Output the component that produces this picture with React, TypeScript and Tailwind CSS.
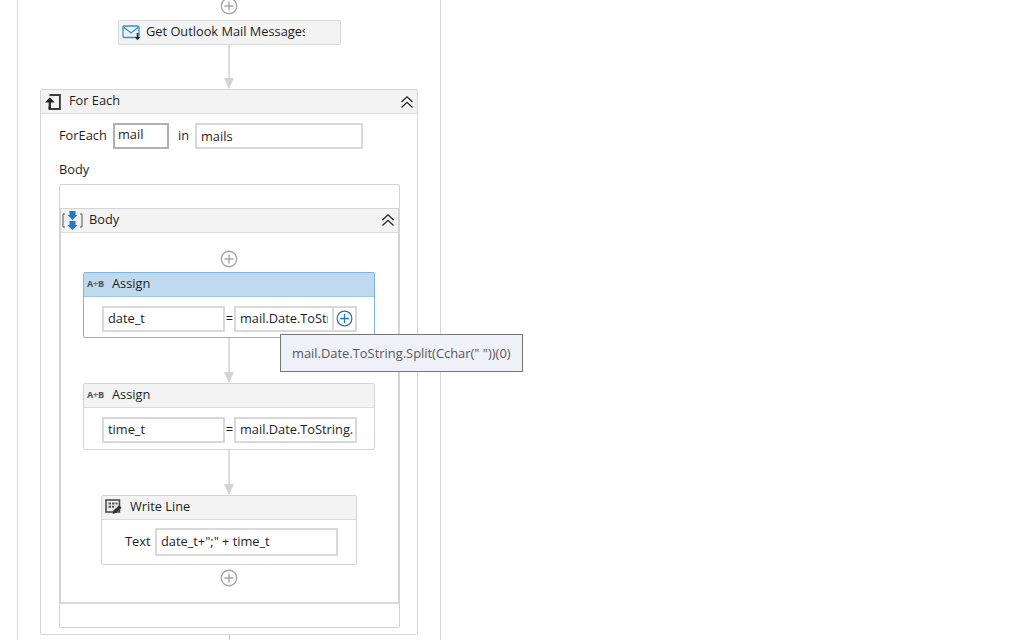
function AddButton({ className = '' }: { className?: string }) {
  return (
    <svg width="18" height="18" viewBox="0 0 18 18" className={className}>
      <circle cx="9" cy="9" r="7.7" fill="white" stroke="#a6a6a6" strokeWidth="1.4" />
      <path d="M9 4.5v9M4.5 9h9" stroke="#a6a6a6" strokeWidth="1.4" />
    </svg>
  );
}

function CollapseIcon() {
  return (
    <svg width="14" height="14" viewBox="0 0 14 14" className="shrink-0">
      <path d="M1.5 7L7 1.8 12.5 7M1.5 12.5L7 7.3l5.5 5.2" fill="none" stroke="#222" strokeWidth="1.2" />
    </svg>
  );
}

function Arrow({ height }: { height: number }) {
  return (
    <svg width="12" height={height} viewBox={`0 0 12 ${height}`} className="block shrink-0">
      <path d={`M6 0V${height - 10}`} stroke="#d4d4d4" strokeWidth="1.5" />
      <path d={`M1 ${height - 11}H11L6 ${height}Z`} fill="#d4d4d4" />
    </svg>
  );
}

function MailIcon() {
  return (
    <svg width="20" height="16" viewBox="0 0 20 16" className="shrink-0">
      <rect x="1" y="1" width="16" height="11.5" rx="1" fill="#eaf3fb" stroke="#3e8ed0" strokeWidth="1.3" />
      <path d="M1.5 2l7.5 6 7.5-6" fill="none" stroke="#3e8ed0" strokeWidth="1.3" />
      <path d="M15.5 8v5" stroke="#222" strokeWidth="1.5" />
      <path d="M12.8 12h5.4l-2.7 3.2z" fill="#222" />
    </svg>
  );
}

function ForEachIcon() {
  return (
    <svg width="16" height="16" viewBox="0 0 16 16" className="shrink-0">
      <path d="M4.5 1h10.4v14H4.5v-3" fill="none" stroke="#3a3a3a" strokeWidth="1.9" />
      <path d="M4.8 15V8" stroke="#222" strokeWidth="2.2" />
      <path d="M0 8.5l4.8-5.2 4.8 5.2z" fill="#222" />
    </svg>
  );
}

function SequenceIcon() {
  return (
    <svg width="21" height="19" viewBox="0 0 21 19" className="shrink-0">
      <path d="M3 3H1v13h2M18 3h2v13h-2" fill="none" stroke="#555" strokeWidth="1" />
      <path d="M7.5 0h6v4h2l-5 5-5-5h2z" fill="#1f78d1" />
      <path d="M7.5 10h6v4h2l-5 5-5-5h2z" fill="#1f78d1" />
    </svg>
  );
}

function AssignIcon() {
  return (
    <span className="text-[9px] font-bold leading-none tracking-[-0.2px] text-[#505050] w-[18px] shrink-0 whitespace-nowrap">
      A<span className="text-[#707070]">+</span>B
    </span>
  );
}

function WriteLineIcon() {
  return (
    <svg width="17" height="16" viewBox="0 0 17 16" className="shrink-0">
      <rect x="1" y="1" width="13.5" height="12" fill="#ececec" stroke="#444" strokeWidth="1.5" />
      <path d="M3.5 3.5h2.5v2h-2.5zM7 3.5h2.5v2h-2.5zM10.5 3.5h2v2h-2zM3.5 6.8h2.5v2h-2.5zM7 6.8h2v2h-2z" fill="#555" />
      <path d="M7.5 15l1-3.4 5.5-5.4 2.6 2.6-5.6 5.2z" fill="#333" />
    </svg>
  );
}

function Field({ value, className = '' }: { value: string; className?: string }) {
  return (
    <div className={`border-2 border-[#d9d9d9] bg-white px-[4px] flex items-center overflow-hidden whitespace-nowrap text-[#1e1e1e] ${className}`}>
      {value}
    </div>
  );
}

function AssignActivity({ lhs, rhs, selected = false }: { lhs: string; rhs: string; selected?: boolean }) {
  return (
    <div className={`ml-[22px] w-[292px] rounded-[2px] border bg-white shrink-0 ${selected ? 'h-[66px] border-[#7db5e0]' : 'h-[67px] border-[#d4d4d4]'}`}>
      <div className={`h-[24px] flex items-center pl-[3px] pb-[2px] border-b ${selected ? 'bg-[#bfdaee] border-[#9cc8e8]' : 'bg-[#f3f3f3] border-[#dcdcdc]'}`}>
        <AssignIcon />
        <span className="ml-[7px] text-[#1e1e1e]">Assign</span>
      </div>
      <div className="flex items-center pl-[18px] pt-[9px]">
        <Field value={lhs} className="w-[123px] h-[26px]" />
        <span className="w-[9px] text-center text-[#1e1e1e]">=</span>
        {selected ? (
          <>
            <div className="w-[100px] h-[26px] border-2 border-[#d9d9d9] bg-white pl-[4px] pr-[4px] flex items-center text-[#1e1e1e]">
              <span className="block overflow-hidden whitespace-nowrap">{rhs}</span>
            </div>
            <div className="w-[23px] h-[26px] border-2 border-l-0 border-[#d9d9d9] flex items-center justify-center">
              <svg width="17" height="17" viewBox="0 0 17 17">
                <circle cx="8.5" cy="8.5" r="7.4" fill="white" stroke="#2f6fa8" strokeWidth="1.2" />
                <path d="M8.5 4v9M4 8.5h9" stroke="#1f78d1" strokeWidth="1.3" />
              </svg>
            </div>
          </>
        ) : (
          <Field value={rhs} className="w-[123px] h-[26px]" />
        )}
      </div>
    </div>
  );
}

export default function App() {
  return (
    <div className="relative h-[640px] w-full overflow-hidden bg-white text-[12.8px] leading-none text-[#1e1e1e] [font-family:'Open_Sans','Noto_Sans',sans-serif]">
      <div className="ml-[17px] w-[424px] h-[640px] border-x border-[#d6d6d6] flex flex-col">
        <AddButton className="block ml-[202px] -mt-[3px] shrink-0" />

        {/* Get Outlook Mail Messages */}
        <div className="ml-[100px] mt-[5px] w-[223px] h-[25px] shrink-0 rounded-[2px] border border-[#d9d9d9] bg-[#f3f3f3] flex items-center pl-[3px]">
          <MailIcon />
          <span className="ml-[4px] w-[159px] pb-[2px] overflow-hidden whitespace-nowrap">Get Outlook Mail Messages</span>
        </div>
        <div className="ml-[205px]"><Arrow height={44} /></div>

        {/* For Each */}
        <div className="ml-[22px] w-[378px] h-[546px] shrink-0 rounded-[2px] border border-[#d4d4d4]">
          <div className="h-[24px] bg-[#f3f3f3] border-b border-[#dcdcdc] flex items-center pl-[4px] pr-[3px]">
            <ForEachIcon />
            <span className="ml-[8px] pb-[2px] flex-1">For Each</span>
            <CollapseIcon />
          </div>
          <div className="flex items-center pl-[18px] pt-[9px]">
            <span className="w-[54px] pb-[1px]">ForEach</span>
            <div className="w-[56px] h-[26px] border-2 border-[#b0b0b0] px-[3px] pb-[3px] flex items-center">mail</div>
            <span className="ml-[9px] w-[17px] pb-[1px]">in</span>
            <Field value="mails" className="w-[168px] h-[26px]" />
          </div>
          <div className="ml-[18px] mt-[14px]">Body</div>

          {/* Body */}
          <div className="ml-[18px] mt-[8px] w-[341px] h-[444px] rounded-[2px] border border-[#d4d4d4] pt-[23px]">
            <div className="h-[396px] border border-l-[#d4d4d4] border-r-[#d4d4d4] border-t-[#d4d4d4] border-b-2 border-b-[#d8d8d8] flex flex-col">
              <div className="h-[24px] shrink-0 bg-[#f3f3f3] border-b border-[#dcdcdc] flex items-center pl-[1px] pr-[3px]">
                <SequenceIcon />
                <span className="ml-[6px] pb-[2px] flex-1">Body</span>
                <CollapseIcon />
              </div>
              <AddButton className="block ml-[159px] mt-[17px] shrink-0" />
              <div className="mt-[4px]">
                <AssignActivity lhs="date_t" rhs="mail.Date.ToString.Split" selected />
              </div>
              <div className="ml-[162px]"><Arrow height={45} /></div>
              <AssignActivity lhs="time_t" rhs="mail.Date.ToString." />
              <div className="ml-[162px]"><Arrow height={45} /></div>

              {/* Write Line */}
              <div className="ml-[40px] w-[256px] h-[70px] shrink-0 rounded-[2px] border border-[#d4d4d4]">
                <div className="h-[24px] bg-[#f3f3f3] border-b border-[#dcdcdc] flex items-center pl-[3px]">
                  <WriteLineIcon />
                  <span className="ml-[8px] pb-[2px]">Write Line</span>
                </div>
                <div className="flex items-center pl-[23px] pt-[8px]">
                  <span className="w-[30px]">Text</span>
                  <Field value={'date_t+";" + time_t'} className="w-[183px] h-[28px]" />
                </div>
              </div>
              <AddButton className="block ml-[159px] mt-[4px] shrink-0" />
            </div>
          </div>
        </div>
        <div className="ml-[211px] w-px h-[8px] shrink-0 bg-[#c8c8c8]" />
      </div>

      {/* tooltip */}
      <div className="absolute left-[280px] top-[334px] w-[243px] h-[38px] border border-[#767676] bg-[#f0f1f8] pl-[11px] flex items-center text-[12.9px] text-[#575757] whitespace-nowrap">
        {'mail.Date.ToString.Split(Cchar(" "))(0)'}
      </div>
    </div>
  );
}
